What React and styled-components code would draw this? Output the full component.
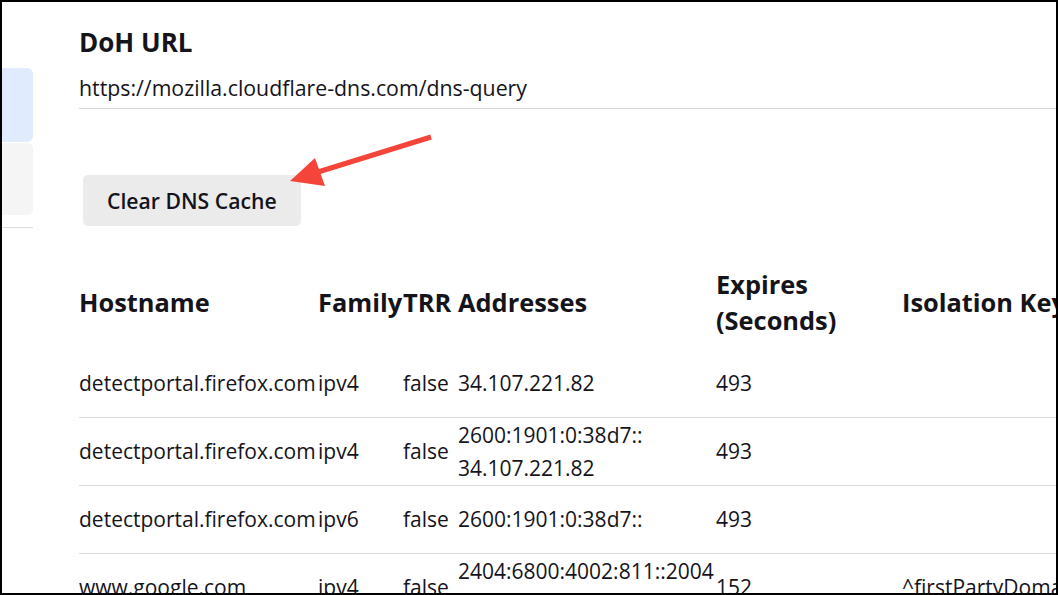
import React from "react";
import styled, { createGlobalStyle } from "styled-components";

const Global = createGlobalStyle`
  * { box-sizing: border-box; }
  html, body { margin: 0; padding: 0; background: #fff; }
  body { font-family: "Open Sans", "Noto Sans", sans-serif; color: #15141a; }
`;

const Frame = styled.div`
  position: relative;
  width: 1058px;
  height: 595px;
  border: 2px solid #000;
  display: flex;
  overflow: hidden;
  background: #fff;
`;

const Sidebar = styled.nav`
  flex: 0 0 31px;
  padding-top: 66px;
  display: flex;
  flex-direction: column;
  gap: 1px;
`;

const NavItem = styled.div`
  height: ${(p) => p.$h}px;
  border-radius: 0 6px 6px 0;
  background: ${(p) => (p.$active ? "#e0ebfd" : "#f5f5f5")};
`;

const NavRule = styled.hr`
  margin: 11px 0 0;
  border: 0;
  border-top: 1px solid #dcdcde;
`;

const Main = styled.main`
  flex: 1;
  min-width: 0;
  padding-left: 46px;
  overflow: hidden;
`;

const Heading = styled.h2`
  margin: 22px 0 0;
  font-size: 26px;
  line-height: 36px;
  font-weight: 700;
`;

const UrlRow = styled.div`
  margin-top: 11px;
  font-size: 21.3px;
  line-height: 33px;
  padding-bottom: 4px;
  border-bottom: 1px solid #d7d7db;
`;

const Button = styled.button`
  display: block;
  margin: 66px 0 0 4px;
  height: 51px;
  padding: 0 24px;
  border: 0;
  border-radius: 5px;
  background: #ebebeb;
  color: #15141a;
  font-family: inherit;
  font-size: 21.2px;
  font-weight: 600;
`;

const Table = styled.table`
  margin-top: 40px;
  width: 1230px;
  table-layout: fixed;
  border-collapse: separate;
  border-spacing: 0;
  font-size: 21px;
`;

const Th = styled.th`
  text-align: left;
  font-size: 25.4px;
  line-height: 36px;
  font-weight: 700;
  padding: 0 0 12px;
  vertical-align: middle;
  white-space: nowrap;
`;

const Td = styled.td`
  height: 68px;
  padding: 0;
  line-height: 33px;
  vertical-align: middle;
  border-bottom: 1px solid #dcdcde;
  overflow-wrap: anywhere;
`;

const Arrow = styled.svg`
  position: absolute;
  left: 278px;
  top: 123px;
  width: 160px;
  height: 70px;
  pointer-events: none;
`;

const rows = [
  ["detectportal.firefox.com", "ipv4", "false", ["34.107.221.82"], "493", ""],
  ["detectportal.firefox.com", "ipv4", "false", ["2600:1901:0:38d7::", "34.107.221.82"], "493", ""],
  ["detectportal.firefox.com", "ipv6", "false", ["2600:1901:0:38d7::"], "493", ""],
  ["www.google.com", "ipv4", "false", ["2404:6800:4002:811::2004", "142.250.183.4"], "152", "^firstPartyDomain=(https,google.com)"],
];

export default function App() {
  return (
    <>
      <Global />
      <Frame>
        <Sidebar>
          <NavItem $active $h={74} />
          <NavItem $h={72} />
          <NavRule />
        </Sidebar>
        <Main>
          <Heading>DoH URL</Heading>
          <UrlRow>https://mozilla.cloudflare-dns.com/dns-query</UrlRow>
          <Button>Clear DNS Cache</Button>
          <Table>
            <colgroup>
              <col style={{ width: 239 }} />
              <col style={{ width: 85 }} />
              <col style={{ width: 55 }} />
              <col style={{ width: 258 }} />
              <col style={{ width: 186 }} />
              <col />
            </colgroup>
            <thead>
              <tr>
                <Th>Hostname</Th>
                <Th>Family</Th>
                <Th>TRR</Th>
                <Th>Addresses</Th>
                <Th>
                  Expires
                  <br />
                  (Seconds)
                </Th>
                <Th>Isolation Key</Th>
              </tr>
            </thead>
            <tbody>
              {rows.map((r, i) => (
                <tr key={i}>
                  <Td>{r[0]}</Td>
                  <Td>{r[1]}</Td>
                  <Td>{r[2]}</Td>
                  <Td>
                    {r[3].map((a, j) => (
                      <div key={j}>{a}</div>
                    ))}
                  </Td>
                  <Td>{r[4]}</Td>
                  <Td>{r[5]}</Td>
                </tr>
              ))}
            </tbody>
          </Table>
        </Main>
        <Arrow viewBox="0 0 160 70">
          <line x1="151" y1="12" x2="38" y2="47" stroke="#f5443a" strokeWidth="5" />
          <polygon points="10,56 35,33 45,61" fill="#f5443a" />
        </Arrow>
      </Frame>
    </>
  );
}
